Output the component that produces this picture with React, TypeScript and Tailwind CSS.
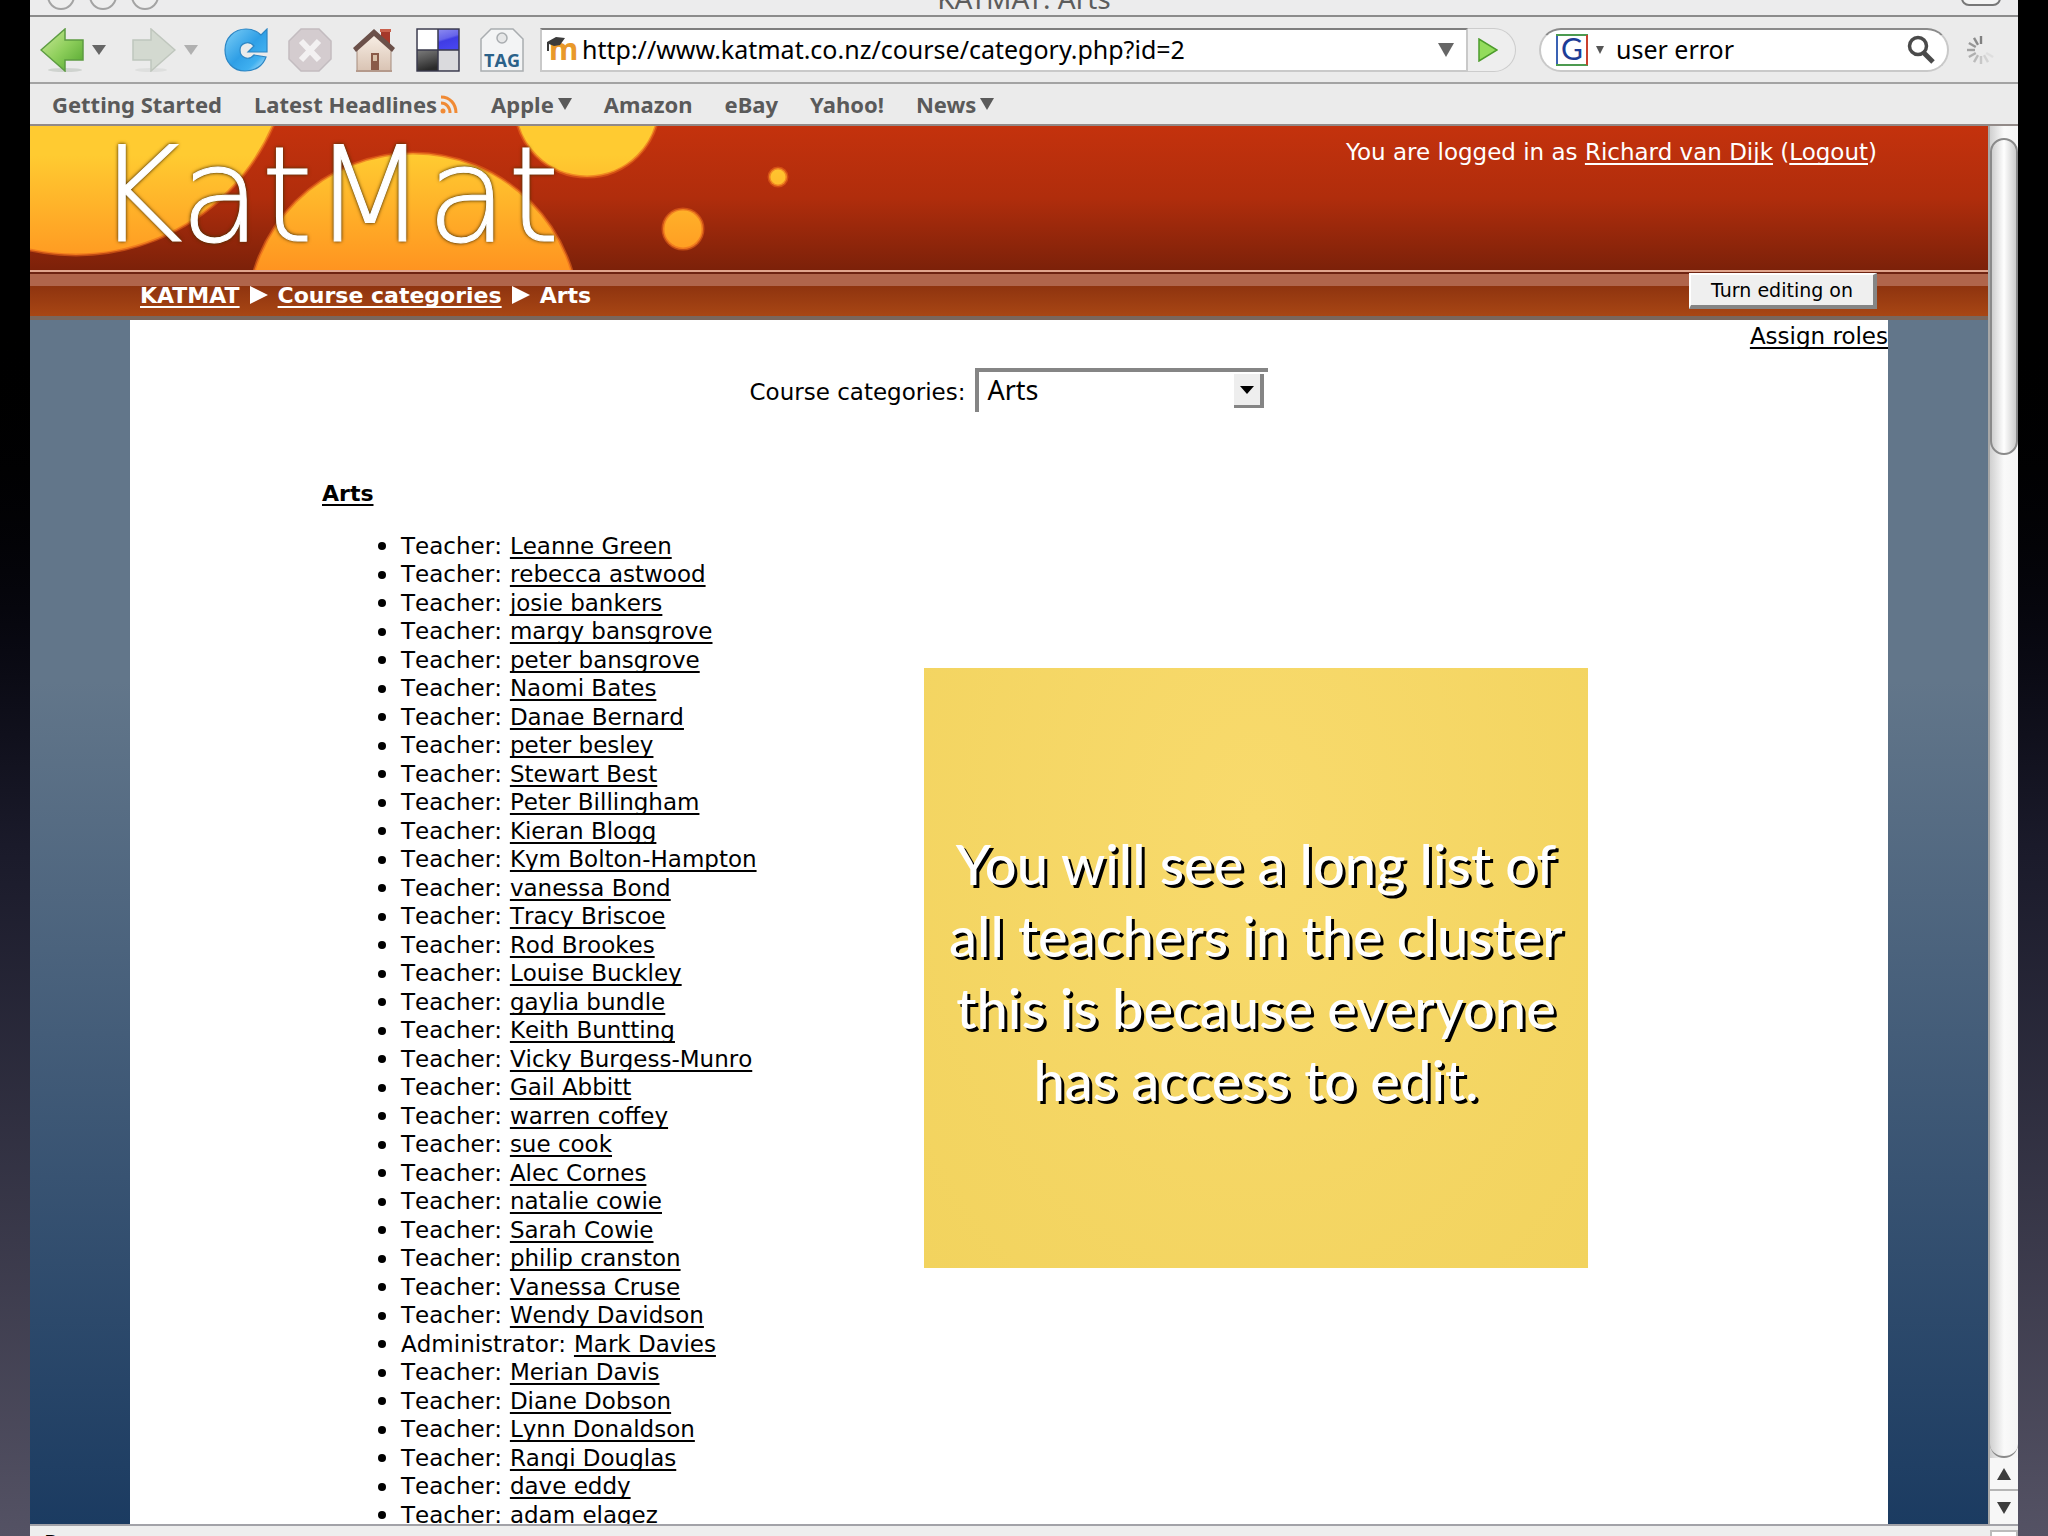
import React from 'react';

interface Person {
    name: string;
    role?: string;
}

const people: Person[] = [
    { name: 'Leanne Green' },
    { name: 'rebecca astwood' },
    { name: 'josie bankers' },
    { name: 'margy bansgrove' },
    { name: 'peter bansgrove' },
    { name: 'Naomi Bates' },
    { name: 'Danae Bernard' },
    { name: 'peter besley' },
    { name: 'Stewart Best' },
    { name: 'Peter Billingham' },
    { name: 'Kieran Blogg' },
    { name: 'Kym Bolton-Hampton' },
    { name: 'vanessa Bond' },
    { name: 'Tracy Briscoe' },
    { name: 'Rod Brookes' },
    { name: 'Louise Buckley' },
    { name: 'gaylia bundle' },
    { name: 'Keith Buntting' },
    { name: 'Vicky Burgess-Munro' },
    { name: 'Gail Abbitt' },
    { name: 'warren coffey' },
    { name: 'sue cook' },
    { name: 'Alec Cornes' },
    { name: 'natalie cowie' },
    { name: 'Sarah Cowie' },
    { name: 'philip cranston' },
    { name: 'Vanessa Cruse' },
    { name: 'Wendy Davidson' },
    { name: 'Mark Davies', role: 'Administrator' },
    { name: 'Merian Davis' },
    { name: 'Diane Dobson' },
    { name: 'Lynn Donaldson' },
    { name: 'Rangi Douglas' },
    { name: 'dave eddy' },
    { name: 'adam elagez' },
];

const linkStyle = 'underline decoration-2 underline-offset-3 [text-decoration-skip-ink:none]';

const Triangle: React.FC<{ className: string }> = ({ className }) => (
    <svg className={className} viewBox="0 0 14 12" preserveAspectRatio="none" fill="currentColor" aria-hidden="true">
        <path d="M0 0h14L7 12z" />
    </svg>
);

const BackIcon = () => (
    <svg className="h-11 w-11" viewBox="0 0 44 44" aria-hidden="true">
        <defs>
            <linearGradient id="back" x1="0" y1="0" x2="1" y2="1">
                <stop offset="0" stopColor="#cdea9c" />
                <stop offset="0.5" stopColor="#8fcf5c" />
                <stop offset="1" stopColor="#4fa42c" />
            </linearGradient>
        </defs>
        <ellipse cx="25" cy="42" rx="17" ry="2" fill="#cfd3cf" />
        <path d="M1 22 25 1v11h18v20H25v11z" fill="url(#back)" stroke="#5d9c42" strokeWidth="1.5" />
    </svg>
);

const ForwardIcon = () => (
    <svg className="h-11 w-11" viewBox="0 0 44 44" aria-hidden="true">
        <ellipse cx="19" cy="42" rx="16" ry="2" fill="#dedfde" />
        <path d="M43 22 19 1v11H1v20h18v11z" fill="#d3d9d0" stroke="#bfc6bd" strokeWidth="1.5" />
    </svg>
);

const ReloadIcon = () => (
    <svg className="h-11 w-11" viewBox="0 0 44 44" aria-hidden="true">
        <defs>
            <linearGradient id="reload" x1="0" y1="0" x2="1" y2="1">
                <stop offset="0" stopColor="#7fd0f7" />
                <stop offset="0.5" stopColor="#2f9fe6" />
                <stop offset="0.75" stopColor="#3fb0f0" />
                <stop offset="1" stopColor="#d8effb" />
            </linearGradient>
        </defs>
        <path
            d="M43 1v23H24l6-6c-5-6-14-3-14 4 0 8 9 11 14 5l12 2c-3 9-11 14-21 14C9 43 1 34 1 22S10 1 22 1c6 0 11 2 15 6z"
            fill="url(#reload)"
            stroke="#2d86c4"
            strokeWidth="1.2"
        />
    </svg>
);

const StopIcon = () => (
    <svg className="h-11 w-11" viewBox="0 0 44 44" aria-hidden="true">
        <path d="M13 1h18l12 12v18L31 43H13L1 31V13z" fill="#d4cccf" stroke="#c3bcc0" strokeWidth="1.5" />
        <path d="m13 13 18 19M31 13 13 32" stroke="#f3f1f2" strokeWidth="6" />
    </svg>
);

const HomeIcon = () => (
    <svg className="h-11 w-11" viewBox="0 0 44 44" aria-hidden="true">
        <defs>
            <linearGradient id="house" x1="0" y1="0" x2="0" y2="1">
                <stop offset="0" stopColor="#fbf3ea" />
                <stop offset="1" stopColor="#d9c3b3" />
            </linearGradient>
        </defs>
        <path d="M29 2h9v17l-9-8z" fill="#a5382a" />
        <path d="M28 1h11v3H28z" fill="#c9604c" />
        <path d="M5 19 22 3l17 16v24H5z" fill="url(#house)" stroke="#a58b7c" />
        <path d="M22 1 1 20l3 4L22 8l18 16 3-4z" fill="#6b5049" />
        <path d="M19 25h8v18h-8z" fill="#8a5a48" />
        <path d="M21 27h4v6h-4z" fill="#d8c0a8" />
        <path d="M4 42h36v2H4z" fill="#b59a8c" />
    </svg>
);

const BookmarkIcon = () => (
    <svg className="h-11 w-11" viewBox="0 0 44 44" aria-hidden="true">
        <defs>
            <linearGradient id="blue" x1="0" y1="0" x2="0.3" y2="1">
                <stop offset="0" stopColor="#8d8cf0" />
                <stop offset="0.5" stopColor="#6664ea" />
                <stop offset="0.6" stopColor="#3f3ce4" />
                <stop offset="1" stopColor="#4644ee" />
            </linearGradient>
            <linearGradient id="dark" x1="0" y1="0" x2="0.3" y2="1">
                <stop offset="0" stopColor="#7c7c7c" />
                <stop offset="0.5" stopColor="#555555" />
                <stop offset="1" stopColor="#2a2a2a" />
            </linearGradient>
        </defs>
        <path d="M0 0h44v44H0z" fill="#ffffff" />
        <path d="M22 1h21v21H22z" fill="url(#blue)" />
        <path d="M1 22h21v21H1z" fill="url(#dark)" />
        <path d="M22 22h21v21H22z" fill="#dadadd" />
        <path d="M1 1h42v42H1zM22 1v42M1 22h42" fill="none" stroke="#3a3a4c" strokeWidth="1.5" />
    </svg>
);

const TagIcon = () => (
    <svg className="h-11 w-11" viewBox="0 0 44 44" aria-hidden="true">
        <path d="M1 43V11L11 1h22l10 10v32z" fill="#f3f4f5" stroke="#a9adb0" strokeWidth="1.5" />
        <circle cx="22" cy="10" r="5" fill="#e6e7e8" stroke="#a9adb0" strokeWidth="1.5" />
        <text x="22" y="39" textAnchor="middle" fontFamily="Open Sans, sans-serif" fontSize="18" fontWeight="700" fill="#2b6189">
            TAG
        </text>
    </svg>
);

const MoodleIcon = () => (
    <svg className="h-8 w-8 overflow-visible" viewBox="0 0 32 32" aria-hidden="true">
        <text x="3" y="26" fontFamily="Noto Sans, sans-serif" fontSize="30" fontWeight="700" fill="#e9992a">
            m
        </text>
        <path d="M1 8 10 3l9 1-5 7-6 1-5-2v7H1z" fill="#3b3b3b" />
    </svg>
);

const GoogleIcon = () => (
    <svg className="h-8 w-8 overflow-visible" viewBox="0 0 32 32" aria-hidden="true">
        <path d="M1 1h30v30H1z" fill="#ffffff" />
        <path d="M1 31V1" stroke="#3a62b4" strokeWidth="2" />
        <path d="M0 1h32M0 31h32" stroke="#4c9a50" strokeWidth="2" />
        <path d="M31 1v30" stroke="#c8402e" strokeWidth="2" />
        <text x="16" y="26" textAnchor="middle" fontFamily="Lato, sans-serif" fontSize="30" fill="#1d3c96">
            G
        </text>
    </svg>
);

const SearchIcon = () => (
    <svg className="h-8 w-8" viewBox="0 0 32 32" fill="none" stroke="#4a4a4a" aria-hidden="true">
        <circle cx="13" cy="12" r="8.5" strokeWidth="3.5" />
        <path d="m19 19 9 9" strokeWidth="5" />
    </svg>
);

const Throbber = () => (
    <svg className="h-8 w-8" viewBox="0 0 32 32" aria-hidden="true">
        {Array.from({ length: 12 }, (_, i) => (
            <path
                key={i}
                d="M16 2v8"
                stroke="#808080"
                strokeWidth="2.4"
                opacity={i === 0 ? 1 : Math.max(0, (i - 3) / 9)}
                transform={`rotate(${i * 30} 16 16)`}
            />
        ))}
    </svg>
);

const RssIcon = () => (
    <svg className="h-5 w-5" viewBox="0 0 20 20" fill="none" stroke="#f08a35" strokeWidth="3" aria-hidden="true">
        <circle cx="4" cy="17" r="2.5" fill="#f08a35" stroke="none" />
        <path d="M2 9c5 0 9 4 9 10M2 3c9 0 15 7 15 16" />
    </svg>
);

const TitleBar = () => (
    <div className="flex h-[17px] items-end justify-between overflow-hidden border-b-2 border-[#8b8b8b] bg-[#ececed] px-[17px] pb-[5px]">
        <div className="flex w-28 shrink-0 justify-between">
            <span className="h-7 w-7 rounded-full border-2 border-[#a3a3a3] bg-[#eeeeee]" />
            <span className="h-7 w-7 rounded-full border-2 border-[#a3a3a3] bg-[#eeeeee]" />
            <span className="h-7 w-7 rounded-full border-2 border-[#a3a3a3] bg-[#eeeeee]" />
        </div>
        <span className="font-['Noto_Sans'] text-[28px] leading-6 text-[#5c5c5c]">KATMAT: Arts</span>
        <div className="flex w-28 shrink-0 justify-end pb-1">
            <span className="h-5 w-10 rounded-lg border-2 border-[#777777] bg-[#f4f4f4]" />
        </div>
    </div>
);

const Toolbar = () => (
    <div className="flex h-[67px] items-center border-b-2 border-[#a3a3a3] bg-[#ebebeb] pl-[10px] pr-[21px]">
        <button type="button" aria-label="Back" className="flex items-center gap-2">
            <BackIcon />
            <Triangle className="h-[10px] w-[14px] text-[#666666]" />
        </button>
        <button type="button" aria-label="Forward" className="ml-[26px] flex items-center gap-2">
            <ForwardIcon />
            <Triangle className="h-[10px] w-[14px] text-[#b0b0b0]" />
        </button>
        <div className="ml-[26px] flex gap-5">
            <button type="button" aria-label="Reload"><ReloadIcon /></button>
            <button type="button" aria-label="Stop"><StopIcon /></button>
            <button type="button" aria-label="Home"><HomeIcon /></button>
            <button type="button" aria-label="Bookmarks"><BookmarkIcon /></button>
            <button type="button" aria-label="Tag"><TagIcon /></button>
        </div>
        <form className="ml-4 flex h-11 flex-1" onSubmit={(e) => e.preventDefault()}>
            <div className="flex flex-1 items-center border-2 border-[#c9c9c9] border-t-[#7d7d7d] bg-white pl-1 pr-3">
                <MoodleIcon />
                <input
                    aria-label="Address"
                    type="text"
                    defaultValue="http://www.katmat.co.nz/course/category.php?id=2"
                    className="ml-1 min-w-0 flex-1 bg-transparent font-['Noto_Sans'] text-[25px] text-black outline-none"
                />
                <Triangle className="h-[14px] w-4 text-[#666666]" />
            </div>
            <button
                type="submit"
                aria-label="Go"
                className="flex w-12 items-center justify-center rounded-r-full border border-l-0 border-[#cccccc] bg-[#eeeeee] pr-2"
            >
                <svg className="h-6 w-5" viewBox="0 0 20 24" aria-hidden="true">
                    <path d="M1 1v22l18-11z" fill="#93dc5c" stroke="#4d9c2c" strokeWidth="1.5" />
                </svg>
            </button>
        </form>
        <form
            className="ml-[23px] flex h-11 w-[410px] items-center rounded-full border-2 border-[#c9c9c9] border-t-[#8a8a8a] bg-white pl-[15px] pr-[10px]"
            onSubmit={(e) => e.preventDefault()}
        >
            <GoogleIcon />
            <Triangle className="ml-2 h-2 w-2 text-[#555555]" />
            <input
                aria-label="Search"
                type="text"
                defaultValue="user error"
                className="ml-3 min-w-0 flex-1 bg-transparent font-['Noto_Sans'] text-[25px] text-black outline-none"
            />
            <button type="submit" aria-label="Search"><SearchIcon /></button>
        </form>
        <div className="ml-4">
            <Throbber />
        </div>
    </div>
);

const BookmarksBar = () => (
    <nav className="flex h-[42px] items-center gap-8 border-b-2 border-[#928a88] bg-[#ebebeb] px-[22px] font-['Noto_Sans'] text-[22px] font-bold text-[#5a5a5a]">
        <a href="#getting-started">Getting Started</a>
        <a href="#headlines" className="flex items-center gap-[2px]">
            Latest Headlines <RssIcon />
        </a>
        <a href="#apple" className="flex items-center gap-1">
            Apple <Triangle className="h-3 w-[14px]" />
        </a>
        <a href="#amazon">Amazon</a>
        <a href="#ebay">eBay</a>
        <a href="#yahoo">Yahoo!</a>
        <a href="#news" className="flex items-center gap-1">
            News <Triangle className="h-3 w-[14px]" />
        </a>
    </nav>
);

const Header = () => (
    <header className="relative flex h-36 justify-between overflow-hidden bg-linear-to-b from-[#c4320d] via-[#b02d0c] to-[#7c2109] pl-[66px] pr-[111px] text-white">
        <svg className="absolute left-0 top-0 h-36 w-[800px]" viewBox="0 0 800 144" aria-hidden="true">
            <defs>
                <linearGradient id="bubble" gradientUnits="userSpaceOnUse" x1="0" y1="0" x2="0" y2="144">
                    <stop offset="0.2" stopColor="#ffcb31" />
                    <stop offset="1" stopColor="#ff9420" />
                </linearGradient>
            </defs>
            <g fill="url(#bubble)" stroke="#e8651a" strokeOpacity="0.6" strokeWidth="3">
                <circle cx="46" cy="-86" r="215" />
                <circle cx="383" cy="193" r="166" />
                <circle cx="557" cy="-21" r="72" />
                <circle cx="653" cy="103" r="20" />
                <circle cx="748" cy="51" r="9" />
            </g>
        </svg>
        <h1 className="relative font-['DejaVu_Sans'] text-[132px] font-extralight leading-[138px] [-webkit-text-stroke:1px_#ffffff] [text-shadow:0_0_4px_#4a3206,0_0_3px_#4a3206]">
            KatMat
        </h1>
        <p className="relative pt-3 text-[23px] leading-7">
            You are logged in as{' '}
            <a href="#profile" className={linkStyle}>Richard van Dijk</a> (
            <a href="#logout" className={linkStyle}>Logout</a>)
        </p>
    </header>
);

const Breadcrumbs = () => (
    <div className="border-b-4 border-t-2 border-b-[#7a665c] border-t-[#e0a48c] bg-[#6e2412] pt-[2px]">
        <div className="h-3 bg-[#b0654b]" />
        <div className="flex h-[30px] items-center justify-between bg-linear-to-b from-[#8f340f] to-[#a84614] pl-[110px] pr-[111px]">
            <nav className="-mt-3 flex items-center gap-[10px] text-[22px] font-bold text-white">
                <a href="#home" className={linkStyle}>KATMAT</a>
                <svg className="h-[18px] w-[18px]" viewBox="0 0 16 18" preserveAspectRatio="none" fill="currentColor" aria-hidden="true"><path d="M0 0v18l16-9z" /></svg>
                <a href="#categories" className={linkStyle}>Course categories</a>
                <svg className="h-[18px] w-[18px]" viewBox="0 0 16 18" preserveAspectRatio="none" fill="currentColor" aria-hidden="true"><path d="M0 0v18l16-9z" /></svg>
                <span>Arts</span>
            </nav>
            <button
                type="button"
                className="-mt-5 h-9 border-b-4 border-l-2 border-r-4 border-t-2 border-b-[#858585] border-l-white border-r-[#858585] border-t-white bg-[#efefef] px-5 text-[19px] leading-7 text-black"
            >
                Turn editing on
            </button>
        </div>
    </div>
);

const StickyNote = () => (
    <aside className="absolute left-[794px] top-[348px] flex h-[600px] w-[664px] items-center justify-center bg-[#f4d664] bg-radial-[at_50%_25%] from-[#f8da6c] to-[#f2d35e] text-center font-['Lato'] text-[56px] font-medium leading-[72px] text-white [text-shadow:3px_3px_0_#000000]">
        <p className="pt-2">
            You will see a long list of
            <br />
            all teachers in the cluster
            <br />
            this is because everyone
            <br />
            has access to edit.
        </p>
    </aside>
);

const Content = () => (
    <div className="min-h-0 flex-1 bg-linear-to-b from-[#62768a] from-30% to-[#1b3b61] px-[100px]">
        <main className="relative h-full bg-white text-[23px] text-black">
            <div className="flex justify-end leading-8">
                <a href="#roles" className={linkStyle}>Assign roles</a>
            </div>
            <div className="mt-4 flex items-center justify-center gap-[10px]">
                <label htmlFor="category" className="pt-1">Course categories:</label>
                <div className="relative">
                    <select
                        id="category"
                        className="h-11 w-[293px] appearance-none border-l-4 border-t-4 border-[#858585] bg-white pb-1 pl-2 font-['Noto_Sans'] text-[27px] leading-9 outline-none"
                        defaultValue="Arts"
                    >
                        <option>Arts</option>
                    </select>
                    <span className="pointer-events-none absolute bottom-1 right-1 flex h-[34px] w-[30px] items-center justify-center border-b-3 border-r-4 border-[#858585] bg-[#eeeeee]">
                        <Triangle className="h-2 w-[14px] text-black" />
                    </span>
                </div>
            </div>
            <h2 className="mt-[66px] pl-48 text-[22px] font-bold leading-8">
                <a href="#arts" className={linkStyle}>Arts</a>
            </h2>
            <ul className="mt-[22px] pl-[248px] [font-kerning:none]">
                {people.map(({ name, role = 'Teacher' }) => (
                    <li
                        key={name}
                        className="flex h-7 items-center gap-2 before:mr-[7px] before:h-2 before:w-2 before:rounded-full before:bg-black even:h-[29px]"
                    >
                        {role}:
                        <a href="#user" className={linkStyle}>{name}</a>
                    </li>
                ))}
            </ul>
            <StickyNote />
        </main>
    </div>
);

const ScrollBar = () => (
    <div className="flex w-[30px] shrink-0 flex-col border-l-2 border-[#a8a8a8] bg-linear-to-r from-[#d0d0d0] via-[#fafafa] to-[#f4f4f4] pt-3">
        <div className="h-[317px] rounded-full border-2 border-[#8a8a8a] bg-linear-to-r from-[#cfcfcf] via-[#ffffff] to-[#cccccc]" />
        <div className="flex-1 rounded-b-full border-b-2 border-[#8a8a8a]" />
        <div className="flex h-[33px] items-center justify-center border-b-2 border-[#b5b5b5] bg-[#f7f7f7] text-[#3d3d3d]">
            <Triangle className="h-3 w-[14px] rotate-180" />
        </div>
        <div className="flex h-[33px] items-center justify-center bg-[#f7f7f7] text-[#3d3d3d]">
            <Triangle className="h-3 w-[14px]" />
        </div>
    </div>
);

const StatusBar = () => (
    <footer className="flex h-3 shrink-0 items-start justify-between overflow-hidden border-t-2 border-[#a2a2a8] bg-[#eeeeee] pl-[14px] pt-1">
        <span className="font-['Noto_Sans'] text-[22px] leading-6 text-black">Done</span>
        <span className="h-8 w-7 border-2 border-[#bbbbbb] bg-white" />
    </footer>
);

const App = () => (
    <div className="h-screen bg-linear-to-b from-black from-20% via-[#1a1a2a] via-55% to-[#545264] px-[30px] font-['DejaVu_Sans',sans-serif]">
        <div className="flex h-full flex-col overflow-hidden">
            <TitleBar />
            <Toolbar />
            <BookmarksBar />
            <div className="flex min-h-0 flex-1">
                <div className="flex min-w-0 flex-1 flex-col overflow-hidden">
                    <Header />
                    <Breadcrumbs />
                    <Content />
                </div>
                <ScrollBar />
            </div>
            <StatusBar />
        </div>
    </div>
);

export default App;
